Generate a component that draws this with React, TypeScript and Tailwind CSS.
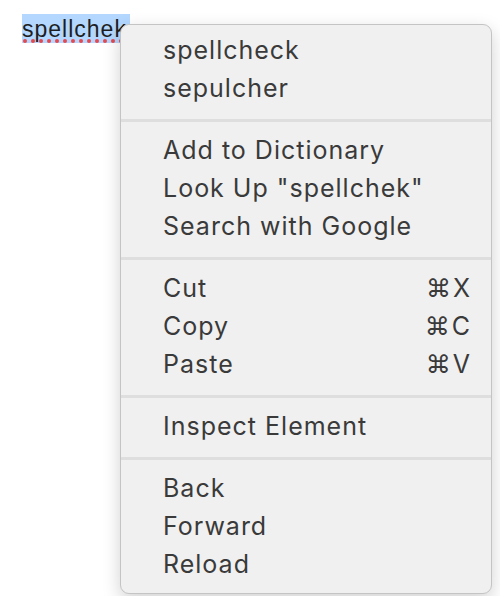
import React from 'react';

type Item = { label: string; shortcut?: string };

const groups: Item[][] = [
  [{ label: 'spellcheck' }, { label: 'sepulcher' }],
  [{ label: 'Add to Dictionary' }, { label: 'Look Up "spellchek"' }, { label: 'Search with Google' }],
  [
    { label: 'Cut', shortcut: '⌘X' },
    { label: 'Copy', shortcut: '⌘C' },
    { label: 'Paste', shortcut: '⌘V' },
  ],
  [{ label: 'Inspect Element' }],
  [{ label: 'Back' }, { label: 'Forward' }, { label: 'Reload' }],
];

const MenuRow: React.FC<{ item: Item }> = ({ item }) => (
  <div className="flex h-[38px] items-center justify-between pl-[42px] pr-[19px]">
    <span>{item.label}</span>
    {item.shortcut && <span className="tracking-[2px]">{item.shortcut}</span>}
  </div>
);

const App: React.FC = () => {
  return (
    <div className="relative h-[596px] w-[500px] overflow-hidden bg-white">
      <div className="px-[22px] pt-[14px]">
        <span
          className="relative block h-[29px] w-[108px] bg-[#b3d7ff] text-[23px] leading-[31px] tracking-[1px] text-[#1e1e1e]"
          style={{ fontFamily: '"Liberation Sans", Arial, sans-serif' }}
        >
          spellchek
          <span className="absolute left-[1px] top-[25px] flex gap-[4px]">
            {Array.from({ length: 13 }).map((_, i) => (
              <span key={i} className="h-[4px] w-[4px] rounded-full bg-[#e5484d]" />
            ))}
          </span>
        </span>
      </div>

      {/* context menu floats over the page */}
      <div
        className="absolute left-[120px] top-[24px] w-[372px] rounded-[9px] border border-[#c4c4c4] bg-[#f0f0f0] pb-[9px] pt-[7px] text-[25px] tracking-[1px] text-[#3a3a3a] shadow-[0_6px_18px_rgba(0,0,0,0.18)]"
        style={{ fontFamily: 'Inter, "Noto Sans", sans-serif' }}
      >
        {groups.map((group, gi) => (
          <div key={gi}>
            {gi > 0 && (
              <div className="flex h-[24px] items-center">
                <div className="h-[3px] w-full bg-[#dedede]" />
              </div>
            )}
            {group.map((item) => (
              <MenuRow key={item.label} item={item} />
            ))}
          </div>
        ))}
      </div>
    </div>
  );
};

export default App;
